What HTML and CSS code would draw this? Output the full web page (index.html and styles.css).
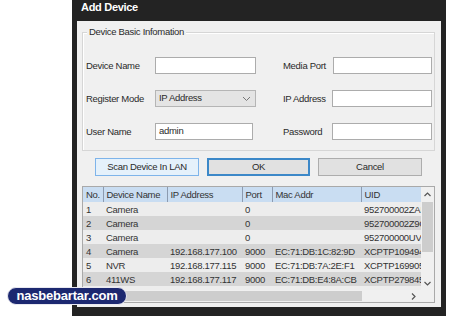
FILE: index.html
```html
<!DOCTYPE html>
<html lang="en">
<head>
  <meta charset="UTF-8" />
  <title>Add Device</title>
  <link rel="stylesheet" href="styles.css">
</head>
<body>
  <div class="window">
    <div class="titlebar">Add Device</div>
    <div class="client">

      <!-- basic info group -->
      <div class="group">
        <span class="legend">Device Basic Infomation</span>
        <div class="fields">
          <label>Device Name</label><div class="input"></div>
          <label>Media Port</label><div class="input"></div>

          <label>Register Mode</label>
          <div class="select">IP Address
            <svg class="chev" width="9" height="6" viewBox="0 0 9 6"><path d="M1 1l3.5 3.5L8 1" fill="none" stroke="#777" stroke-width="1"/></svg>
          </div>
          <label>IP Address</label><div class="input ip"></div>

          <label>User Name</label><div class="input user">admin</div>
          <label>Password</label><div class="input ip"></div>
        </div>
      </div>

      <div class="buttons">
        <div class="btn scan">Scan Device In LAN</div>
        <div class="btn ok">OK</div>
        <div class="btn">Cancel</div>
      </div>

      <!-- device list -->
      <div class="list">
        <div class="list-body">
          <table class="devices">
            <colgroup><col class="c-no"><col class="c-name"><col class="c-ip"><col class="c-port"><col class="c-mac"><col class="c-uid"></colgroup>
            <thead>
              <tr><th>No.</th><th>Device Name</th><th>IP Address</th><th>Port</th><th>Mac Addr</th><th>UID</th></tr>
            </thead>
            <tbody>
              <tr><td>1</td><td>Camera</td><td></td><td>0</td><td></td><td>952700002ZAB</td></tr>
              <tr><td>2</td><td>Camera</td><td></td><td>0</td><td></td><td>952700002Z9C</td></tr>
              <tr><td>3</td><td>Camera</td><td></td><td>0</td><td></td><td>952700000UVW</td></tr>
              <tr><td>4</td><td>Camera</td><td>192.168.177.100</td><td>9000</td><td>EC:71:DB:1C:82:9D</td><td>XCPTP109494</td></tr>
              <tr><td>5</td><td>NVR</td><td>192.168.177.115</td><td>9000</td><td>EC:71:DB:7A:2E:F1</td><td>XCPTP169905</td></tr>
              <tr><td>6</td><td>411WS</td><td>192.168.177.117</td><td>9000</td><td>EC:71:DB:E4:8A:CB</td><td>XCPTP279845</td></tr>
              <tr><td>7</td><td>IPC</td><td>192.168.177.121</td><td>9000</td><td>EC:71:DB:A1:3B:46</td><td>XCPTP310022</td></tr>
            </tbody>
          </table>
          <div class="vscroll">
            <div class="sb-btn up">
              <svg width="7" height="5" viewBox="0 0 7 5"><path d="M0.5 4L3.5 1L6.5 4" fill="none" stroke="#555" stroke-width="1.2"/></svg>
            </div>
            <div class="vthumb"></div>
            <div class="vtrack"></div>
            <div class="sb-btn down">
              <svg width="7" height="5" viewBox="0 0 7 5"><path d="M0.5 1L3.5 4L6.5 1" fill="none" stroke="#555" stroke-width="1.2"/></svg>
            </div>
          </div>
        </div>
        <div class="hscroll">
          <div class="hthumb"></div>
          <div class="htrack"></div>
          <div class="sb-btn right">
            <svg width="5" height="7" viewBox="0 0 5 7"><path d="M1 0.5L4 3.5L1 6.5" fill="none" stroke="#555" stroke-width="1.2"/></svg>
          </div>
          <div class="corner"></div>
        </div>
      </div>

    </div>
  </div>

  <div class="badge">nasbebartar.com</div>
</body>
</html>
```

FILE: styles.css
```css
body { margin: 0; background: #fff; font-family: "Liberation Sans", Arial, sans-serif; font-size: 9.5px; letter-spacing: -0.3px; color: #2a2a2a; }
.window { width: 364px; height: 307px; margin-left: 72px; padding: 0 5px 9px; background: #232323; }
.titlebar { height: 21px; line-height: 14px; padding-left: 4px; color: #fff; font-weight: bold; font-size: 11px; letter-spacing: -0.3px; }
.client { height: 286px; background: #f0f0f0; padding: 11px 0 0 5px; box-sizing: border-box; }

.group { position: relative; width: 353px; border: 1px solid #d6d6d6; box-shadow: inset 1px 1px 0 #fff; padding: 24px 0 10px 3px; box-sizing: border-box; }
.legend { position: absolute; top: -7px; left: 4px; padding: 0 2px; background: #f0f0f0; line-height: 12px; }
.fields { display: grid; grid-template-columns: 69px 101px 27px 50px 99px; grid-auto-rows: 17px; row-gap: 16px; align-items: center; }
.fields label:nth-child(4n+3) { grid-column: 4; }
.input { height: 17px; box-sizing: border-box; background: #fff; border: 1px solid #acacac; padding-left: 3px; line-height: 14px; }
.input.user { width: 98px; }
.input.ip { margin-left: -1px; }
.select { position: relative; height: 17px; box-sizing: border-box; background: #e4e4e4; border: 1px solid #b5b5b5; padding-left: 3px; line-height: 14px; }
.chev { position: absolute; right: 4px; top: 5px; }

.buttons { display: flex; gap: 8px; margin: 7px 0 0 13px; }
.btn { width: 104px; height: 18px; box-sizing: border-box; background: #e1e1e1; border: 1px solid #adadad; text-align: center; line-height: 16px; }
.btn.scan { background: #e5f1fb; border-color: #7eb4ea; }
.btn.ok { width: 103px; border: 2px solid #3c88c8; line-height: 14px; }

.list { width: 353px; margin-top: 10px; border: 1px solid #a9a9a9; box-sizing: border-box; background: #f0f0f0; }
.list-body { display: flex; height: 103px; overflow: hidden; }
.devices { width: 338px; border-collapse: collapse; table-layout: fixed; color: #333; }
.c-no { width: 20px; } .c-name { width: 64px; } .c-ip { width: 75px; } .c-port { width: 30px; } .c-mac { width: 89px; } .c-uid { width: 60px; }
.devices th { height: 15px; padding: 0 0 0 3px; background: #c9ddf2; font-weight: normal; text-align: left; border-left: 1px solid #8c9bb0; white-space: nowrap; overflow: hidden; }
.devices th:first-child { border-left: none; }
.devices td { height: 14px; padding: 0 0 0 3px; white-space: nowrap; overflow: hidden; background: #ededed; }
.devices tbody tr:nth-child(even) td { background: #d5d5d5; }

.vscroll { width: 13px; display: flex; flex-direction: column; background: #f0f0f0; }
.sb-btn { display: flex; align-items: center; justify-content: center; }
.sb-btn.up { height: 15px; }
.vthumb { height: 50px; background: #cdcdcd; margin: 0 1px; }
.vtrack { flex: 1; }
.sb-btn.down { height: 14px; }

.hscroll { display: flex; height: 12px; }
.hthumb { width: 279px; background: #cdcdcd; margin: 1px 0; }
.htrack { flex: 1; }
.sb-btn.right { width: 16px; }
.corner { width: 13px; }

.badge { position: absolute; left: 7px; top: 287px; width: 120px; height: 18px; box-sizing: border-box; border: 1.5px solid #e8e8f0; border-radius: 9px; background: #1c2870; color: #fff; font-weight: bold; font-size: 13px; letter-spacing: -0.2px; line-height: 15px; text-align: center; }
```
